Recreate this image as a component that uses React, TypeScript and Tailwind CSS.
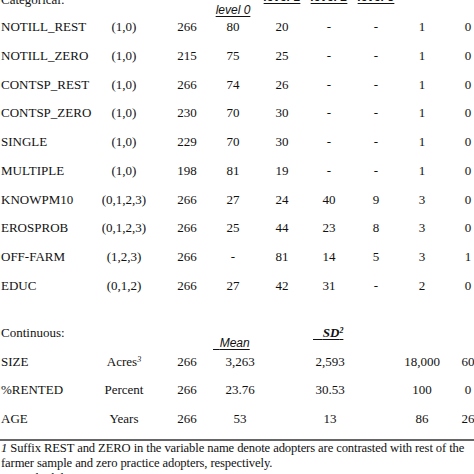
import type { ReactNode } from "react";

type Cat = {
  name: string;
  range: string;
  n: string;
  vals: string[];
};

const categorical: Cat[] = [
  { name: "NOTILL_REST", range: "(1,0)", n: "266", vals: ["80", "20", "-", "-", "1", "0"] },
  { name: "NOTILL_ZERO", range: "(1,0)", n: "215", vals: ["75", "25", "-", "-", "1", "0"] },
  { name: "CONTSP_REST", range: "(1,0)", n: "266", vals: ["74", "26", "-", "-", "1", "0"] },
  { name: "CONTSP_ZERO", range: "(1,0)", n: "230", vals: ["70", "30", "-", "-", "1", "0"] },
  { name: "SINGLE", range: "(1,0)", n: "229", vals: ["70", "30", "-", "-", "1", "0"] },
  { name: "MULTIPLE", range: "(1,0)", n: "198", vals: ["81", "19", "-", "-", "1", "0"] },
  { name: "KNOWPM10", range: "(0,1,2,3)", n: "266", vals: ["27", "24", "40", "9", "3", "0"] },
  { name: "EROSPROB", range: "(0,1,2,3)", n: "266", vals: ["25", "44", "23", "8", "3", "0"] },
  { name: "OFF-FARM", range: "(1,2,3)", n: "266", vals: ["-", "81", "14", "5", "3", "1"] },
  { name: "EDUC", range: "(0,1,2)", n: "266", vals: ["27", "42", "31", "-", "2", "0"] },
];

type Cont = {
  name: string;
  unit: ReactNode;
  n: string;
  mean: string;
  sd: string;
  max: string;
  last: string;
};

const continuous: Cont[] = [
  {
    name: "SIZE",
    unit: (
      <>
        Acres<sup className="italic text-[8px]">3</sup>
      </>
    ),
    n: "266",
    mean: "3,263",
    sd: "2,593",
    max: "18,000",
    last: "60",
  },
  { name: "%RENTED", unit: "Percent", n: "266", mean: "23.76", sd: "30.53", max: "100", last: "0" },
  { name: "AGE", unit: "Years", n: "266", mean: "53", sd: "13", max: "86", last: "26" },
];

// centred cell widths, chosen so that the column centres line up with the print
const catCols = ["w-[68px]", "w-[58px]", "w-[34px]", "w-[64px]", "w-[30px]", "w-[64px]", "w-[28px]", "w-[64px]"];

function Row({ children }: { children: ReactNode }) {
  return <div className="flex h-[28.75px] items-center whitespace-nowrap">{children}</div>;
}

function LevelHead({ label }: { label: string }) {
  return (
    <span className="font-['Liberation_Sans',sans-serif] text-[12px] italic underline decoration-1 underline-offset-2">
      {label}
    </span>
  );
}

export default function App() {
  return (
    <div className="h-[474px] w-[474px] overflow-hidden bg-white font-['Liberation_Serif',serif] text-[13px] text-[#111]">
      <div className="-mt-[10px] w-[520px]">
        {/* header lines */}
        <div className="flex h-[14px] items-center whitespace-nowrap">
          <div className="mt-[5px] w-[90px] pl-px leading-none">Categorical:</div>
          <div className="w-[68px]" />
          <div className="w-[58px]" />
          <div className="w-[34px]" />
          <div className="flex w-[64px] justify-center font-bold">
            <LevelHead label="level 1" />
          </div>
          <div className="flex w-[30px] justify-center font-bold">
            <LevelHead label="level 2" />
          </div>
          <div className="flex w-[64px] justify-center font-bold">
            <LevelHead label="level 3" />
          </div>
        </div>
        <div className="flex h-[12px] items-center whitespace-nowrap">
          <div className="w-[90px]" />
          <div className="w-[68px]" />
          <div className="w-[58px]" />
          <div className="flex w-[34px] justify-center">
            <LevelHead label="level 0" />
          </div>
        </div>

        <div className="-mt-[3.5px]">
          {categorical.map((r) => (
            <Row key={r.name}>
              <div className="w-[90px] pl-px">{r.name}</div>
              <div className={`${catCols[0]} text-center`}>{r.range}</div>
              <div className={`${catCols[1]} text-center`}>{r.n}</div>
              {r.vals.map((v, i) => (
                <div key={i} className={`${catCols[i + 2]} text-center`}>
                  {v}
                </div>
              ))}
            </Row>
          ))}
        </div>

        {/* continuous block */}
        <div className="mt-[27px] flex h-[12px] items-center whitespace-nowrap">
          <div className="w-[90px] pl-px">Continuous:</div>
          <div className="w-[223px]" />
          <div className="w-[40px] font-bold italic underline decoration-1 underline-offset-2">
            {"\u00a0\u00a0\u00a0"}SD<sup className="text-[8px]">2</sup>
          </div>
        </div>
        <div className="flex h-[8px] items-center whitespace-nowrap">
          <div className="w-[90px]" />
          <div className="w-[68px]" />
          <div className="w-[55px]" />
          <div className="w-[48px] font-['Liberation_Sans',sans-serif] text-[12px] italic underline decoration-1 underline-offset-2">
            {"\u00a0\u00a0"}Mean
          </div>
        </div>

        {continuous.map((r) => (
          <Row key={r.name}>
            <div className="w-[90px] pl-px">{r.name}</div>
            <div className="w-[68px] text-center">{r.unit}</div>
            <div className="w-[58px] text-center">{r.n}</div>
            <div className="w-[48px] text-center">{r.mean}</div>
            <div className="w-[132px] text-center">{r.sd}</div>
            <div className="w-[52px] text-center">{r.max}</div>
            <div className="w-[40px] text-center">{r.last}</div>
          </Row>
        ))}

        <div className="mt-[6px] h-[2px] w-[474px] bg-[#666]" />

        <div className="w-[474px] pl-px text-[12.6px] leading-[15px] tracking-[-0.1px]">
          <p>
            <span className="italic">1</span> Suffix REST and ZERO in the variable name denote adopters are contrasted with rest of the farmer
            sample and zero practice adopters, respectively.
          </p>
          <p>
            <span className="italic">2</span> Standard deviation.
          </p>
        </div>
      </div>
    </div>
  );
}
